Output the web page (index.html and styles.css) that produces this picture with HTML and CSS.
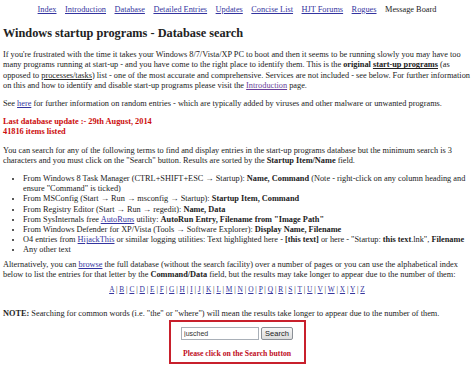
FILE: index.html
```html
<!DOCTYPE html>
<html lang="en">
<head>
  <meta charset="UTF-8">
  <title>Windows startup programs - Database search</title>
  <link rel="stylesheet" href="styles.css">
</head>
<body>
  <div class="nav">
    <a href="#">Index</a>
    <a href="#">Introduction</a>
    <a href="#">Database</a>
    <a href="#">Detailed Entries</a>
    <a href="#">Updates</a>
    <a href="#">Concise List</a>
    <a href="#">HJT Forums</a>
    <a href="#">Rogues</a>
    <span>Message Board</span>
  </div>

  <h1>Windows startup programs - Database search</h1>

  <p>If you're frustrated with the time it takes your Windows 8/7/Vista/XP PC to boot and then it seems to be running slowly you may have too many programs running at start-up - and you have come to the right place to identify them. This is the <b>original <a class="dark" href="#">start-up programs</a></b> (as opposed to <a class="dark" href="#">processes/tasks</a>) list - one of the most accurate and comprehensive. Services are not included - see below. For further information on this and how to identify and disable start-up programs please visit the <a class="visited" href="#">Introduction</a> page.</p>

  <p>See <a href="#">here</a> for further information on random entries - which are typically added by viruses and other malware or unwanted programs.</p>

  <p class="update">Last database update :- 29th August, 2014<br>41816 items listed</p>

  <p>You can search for any of the following terms to find and display entries in the start-up programs database but the minimum search is 3 characters and you must click on the "Search" button. Results are sorted by the <b>Startup Item/Name</b> field.</p>

  <ul class="terms">
    <li>From Windows 8 Task Manager (CTRL+SHIFT+ESC &rarr; Startup): <b>Name, Command</b> (Note - right-click on any column heading and ensure "Command" is ticked)</li>
    <li>From MSConfig (Start &rarr; Run &rarr; msconfig &rarr; Startup): <b>Startup Item, Command</b></li>
    <li>From Registry Editor (Start &rarr; Run &rarr; regedit): <b>Name, Data</b></li>
    <li>From SysInternals free <a href="#">AutoRuns</a> utility: <b>AutoRun Entry, Filename from "Image Path"</b></li>
    <li>From Windows Defender for XP/Vista (Tools &rarr; Software Explorer): <b>Display Name, Filename</b></li>
    <li>O4 entries from <a href="#">HijackThis</a> or similar logging utilities: Text highlighted here - <b>[this text]</b> or here - "Startup: <b>this text</b>.lnk", <b>Filename</b></li>
    <li>Any other text</li>
  </ul>

  <p class="alt">Alternatively, you can <a href="#">browse</a> the full database (without the search facility) over a number of pages or you can use the alphabetical index below to list the entries for that letter by the <b>Command/Data</b> field, but the results may take longer to appear due to the number of them:</p>

  <p class="letters">
    <a href="#">A</a> | <a href="#">B</a> | <a href="#">C</a> | <a href="#">D</a> | <a href="#">E</a> | <a href="#">F</a> | <a href="#">G</a> | <a href="#">H</a> | <a href="#">I</a> | <a href="#">J</a> | <a href="#">K</a> | <a href="#">L</a> | <a href="#">M</a> | <a href="#">N</a> | <a href="#">O</a> | <a href="#">P</a> | <a href="#">Q</a> | <a href="#">R</a> | <a href="#">S</a> | <a href="#">T</a> | <a href="#">U</a> | <a href="#">V</a> | <a href="#">W</a> | <a href="#">X</a> | <a href="#">Y</a> | <a href="#">Z</a>
  </p>

  <p class="note"><b>NOTE:</b> Searching for common words (i.e. "the" or "where") will mean the results take longer to appear due to the number of them.</p>

  <form class="search-box" action="#">
    <div class="search-row">
      <input type="text" value="jusched">
      <button type="button">Search</button>
    </div>
    <div class="search-msg">Please click on the Search button</div>
  </form>
</body>
</html>
```

FILE: styles.css
```css
/* page base */
body {
  margin: 0 3px;
  font-family: "Liberation Serif", "Times New Roman", serif;
  font-size: 8.3px;
  line-height: 10.2px;
  color: #222;
  background: #fff;
}

a {
  color: #3434a0;
}

a.dark {
  color: #222;
}

a.visited {
  color: #6a3f9a;
}

p {
  margin: 8px 0;
}

/* top navigation */
.nav {
  display: flex;
  justify-content: center;
  gap: 8.5px;
  padding-top: 5px;
}

.nav a,
.nav span {
  white-space: nowrap;
}

h1 {
  font-size: 12.3px;
  line-height: 14px;
  margin: 11px 0 10px;
}

.update {
  color: #cc0c0c;
  font-weight: bold;
}

.terms {
  margin: 8px 0 4px;
  padding-left: 20px;
  list-style: disc;
}

.alt {
  margin: 4px 0 5px;
}

.letters {
  text-align: center;
  font-size: 7.4px;
  margin: 5px 0 14px;
}

.note {
  margin: 14px 0 1px;
}

/* search form */
.search-box {
  width: 133px;
  margin: 0 auto;
  border: 2px solid #c8202c;
  padding: 5px 0 2px;
  display: flex;
  flex-direction: column;
  align-items: center;
  gap: 9px;
}

.search-row {
  display: flex;
  align-items: center;
  gap: 2px;
}

.search-row input {
  width: 72px;
  height: 11px;
  padding: 0 2px;
  border: 1px solid #a9b0b8;
  font-family: "Liberation Sans", Arial, sans-serif;
  font-size: 7px;
  color: #333;
  box-sizing: content-box;
}

.search-row button {
  height: 13px;
  padding: 0 3px;
  border: 1px solid #8a8f96;
  border-radius: 2px;
  background: linear-gradient(#f6f6f6, #dcdcdc);
  font-family: "Liberation Sans", Arial, sans-serif;
  font-size: 7.5px;
  line-height: 11px;
  color: #222;
}

.search-msg {
  color: #c00c1c;
  font-weight: bold;
  font-size: 7.7px;
}
```
